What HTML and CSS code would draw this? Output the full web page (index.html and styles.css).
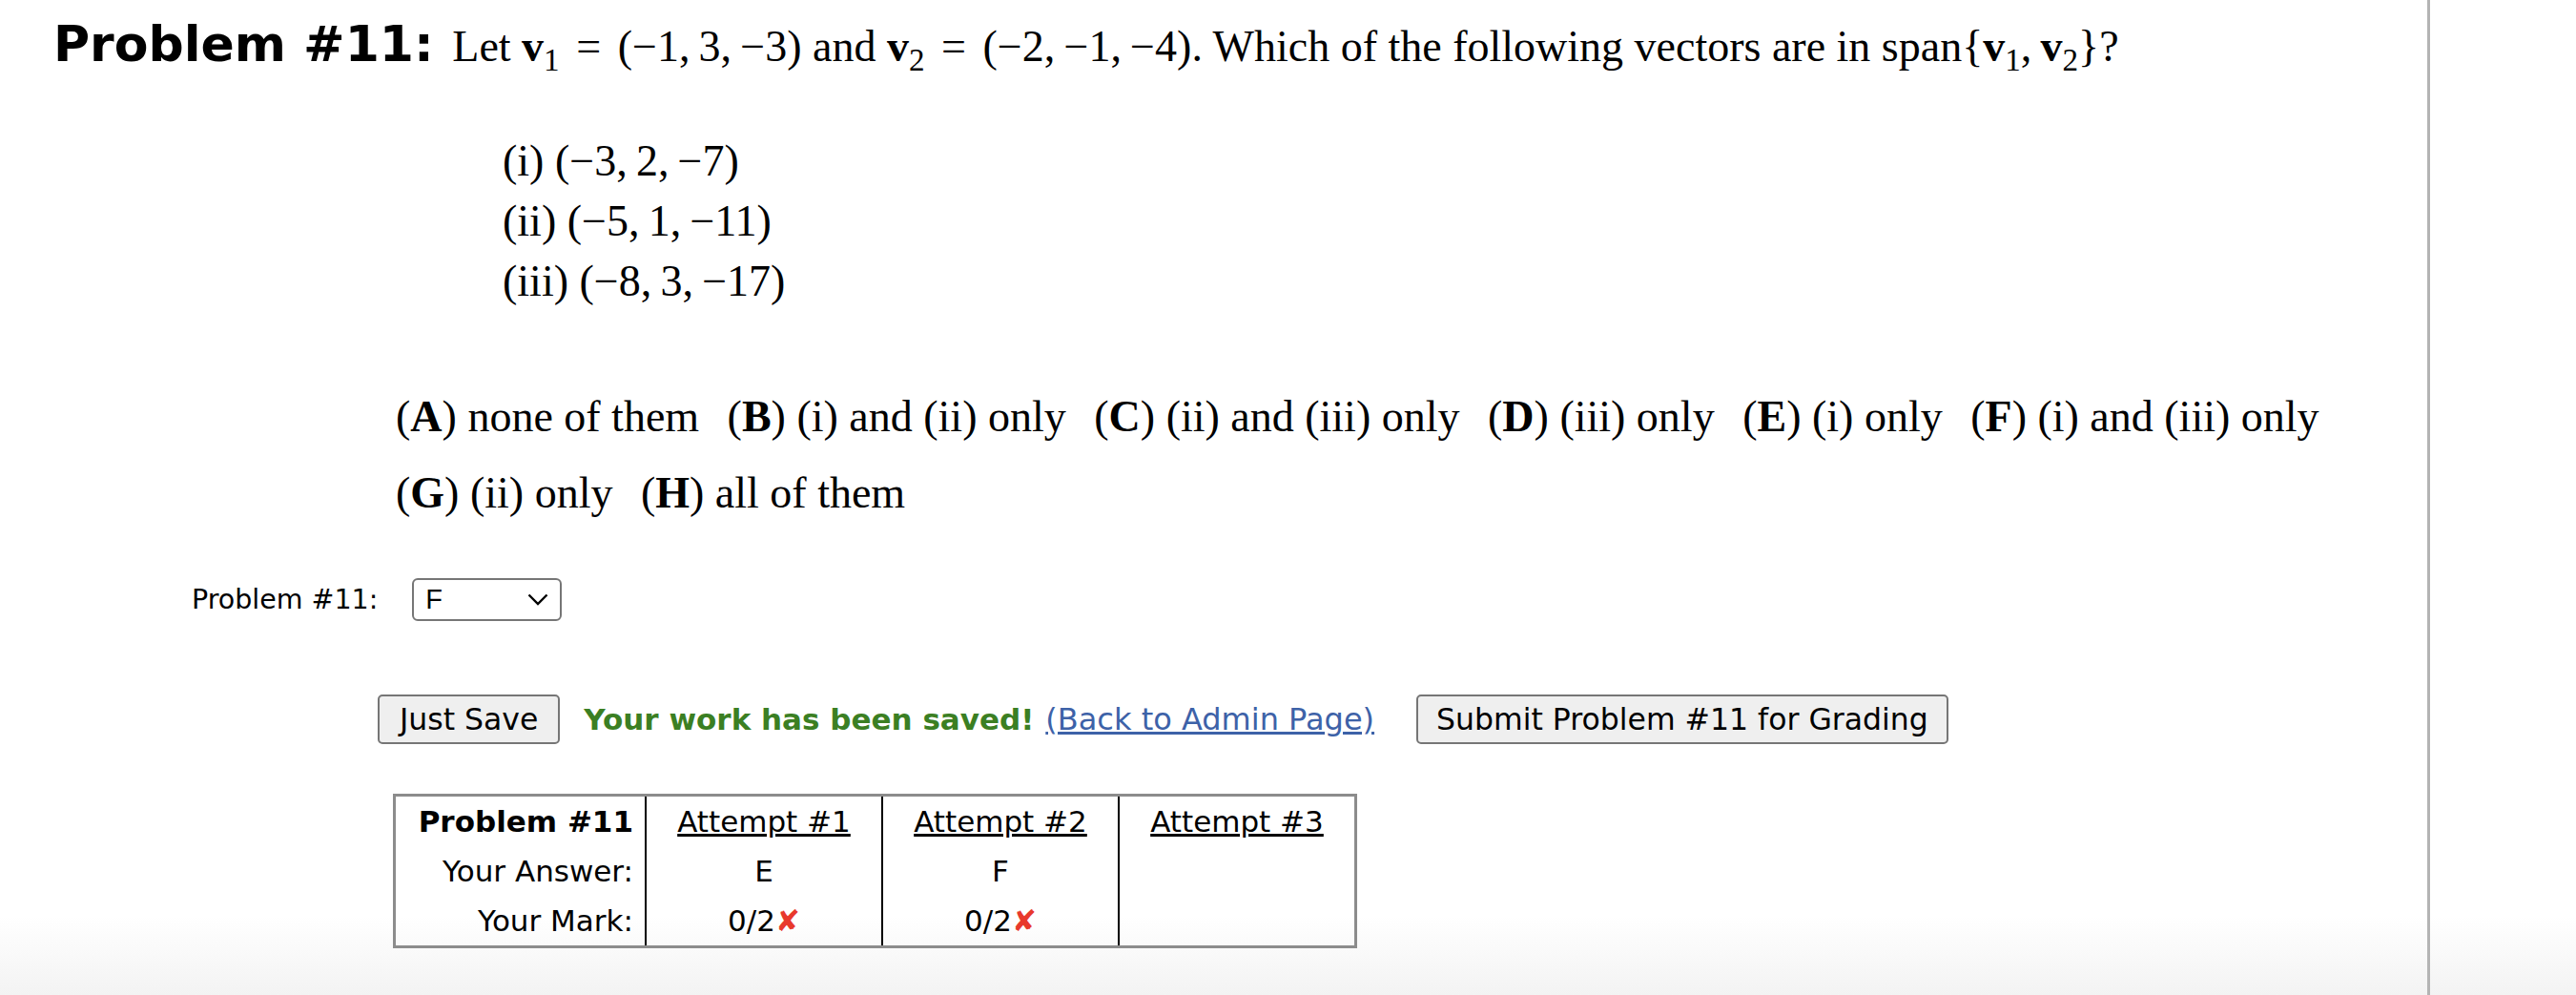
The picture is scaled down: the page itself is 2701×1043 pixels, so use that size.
FILE: index.html
```html
<!DOCTYPE html>
<html lang="en">
<head>
    <meta charset="UTF-8">
    <title>Problem #11</title>
    <link rel="stylesheet" href="styles.css">
</head>
<body>
    <div class="page">
        <p class="statement"><span class="prob-num">Problem #11:</span> Let <b>v</b><sub>1</sub> <span class="rel">=</span> (−1,&thinsp;3,&thinsp;−3) and <b>v</b><sub>2</sub> <span class="rel">=</span> (−2,&thinsp;−1,&thinsp;−4). Which of the following vectors are in span{<b>v</b><sub>1</sub>,&thinsp;<b>v</b><sub>2</sub>}?</p>

        <div class="vectors">
            <div>(i) (−3,&thinsp;2,&thinsp;−7)</div>
            <div>(ii) (−5,&thinsp;1,&thinsp;−11)</div>
            <div>(iii) (−8,&thinsp;3,&thinsp;−17)</div>
        </div>

        <div class="choices">
            <span class="choice">(<b>A</b>) none of them</span>
            <span class="choice">(<b>B</b>) (i) and (ii) only</span>
            <span class="choice">(<b>C</b>) (ii) and (iii) only</span>
            <span class="choice">(<b>D</b>) (iii) only</span>
            <span class="choice">(<b>E</b>) (i) only</span>
            <span class="choice">(<b>F</b>) (i) and (iii) only</span>
            <span class="choice">(<b>G</b>) (ii) only</span>
            <span class="choice">(<b>H</b>) all of them</span>
        </div>

        <div class="answer-row">
            <label class="answer-label">Problem #11:</label>
            <div class="answer-select">
                <span>F</span>
                <svg width="22" height="13" viewBox="0 0 22 13"><polyline points="1.5,1.5 11,11 20.5,1.5" fill="none" stroke="#000" stroke-width="2.4"/></svg>
            </div>
        </div>

        <div class="actions">
            <button class="btn">Just Save</button>
            <span class="saved">Your work has been saved!</span>
            <a href="#" class="admin-link">(Back to Admin Page)</a>
            <button class="btn submit">Submit Problem #11 for Grading</button>
        </div>

        <table class="attempts">
            <tr>
                <th>Problem #11</th>
                <td><u>Attempt #1</u></td>
                <td><u>Attempt #2</u></td>
                <td><u>Attempt #3</u></td>
            </tr>
            <tr>
                <th class="row-label">Your Answer:</th>
                <td>E</td>
                <td>F</td>
                <td></td>
            </tr>
            <tr>
                <th class="row-label">Your Mark:</th>
                <td>0/2<span class="wrong">✘</span></td>
                <td>0/2<span class="wrong">✘</span></td>
                <td></td>
            </tr>
        </table>
    </div>
</body>
</html>
```

FILE: styles.css
```css
body {
    margin: 0;
    padding: 0;
    background: linear-gradient(to bottom, #ffffff 0, #ffffff 960px, #f3f3f3 1043px);
    min-height: 1043px;
    font-family: "Liberation Serif", "Times New Roman", serif;
    color: #000;
}
.page {
    width: 2548px;
    min-height: 1043px;
    border-right: 3px solid #b4b4b4;
    box-sizing: border-box;
    padding-top: 16px;
}
.statement {
    margin: 0;
    padding-left: 56px;
    font-size: 46px;
    line-height: 60px;
}
.prob-num {
    font-family: "DejaVu Sans", Verdana, sans-serif;
    font-weight: bold;
    font-size: 52px;
    margin-right: 8px;
}
.statement sub {
    font-size: 0.72em;
    line-height: 0;
}
.rel {
    margin: 0 6px;
}
.vectors {
    margin-top: 58px;
    padding-left: 527px;
    font-size: 46px;
    line-height: 63px;
}
.choices {
    margin-top: 71px;
    padding-left: 415px;
    width: 2100px;
    font-size: 46px;
    line-height: 80px;
}
.choice {
    white-space: nowrap;
    margin-right: 18px;
}
.answer-row {
    display: flex;
    align-items: center;
    margin-top: 49px;
    padding-left: 201px;
}
.answer-label {
    font-family: "DejaVu Sans", Verdana, sans-serif;
    font-size: 28.5px;
    margin-right: 36px;
}
.answer-select {
    display: flex;
    align-items: center;
    justify-content: space-between;
    width: 157px;
    height: 45px;
    box-sizing: border-box;
    border: 2.5px solid #767676;
    border-radius: 6px;
    padding: 0 12px 0 12px;
    font-family: "Liberation Sans", Arial, sans-serif;
    font-size: 29px;
}
.actions {
    display: flex;
    align-items: center;
    margin-top: 77px;
    padding-left: 396px;
    font-family: "DejaVu Sans", Verdana, sans-serif;
    font-size: 31px;
}
.btn {
    font-family: "DejaVu Sans", Verdana, sans-serif;
    font-size: 31.5px;
    height: 52px;
    padding: 0 21px;
    background-color: #efefef;
    border: 2.5px solid #767676;
    border-radius: 5px;
    color: #000;
}
.saved {
    color: #3b7f23;
    font-weight: bold;
    margin-left: 25px;
}
.admin-link {
    color: #3d62a8;
    font-size: 32px;
    margin-left: 12px;
}
.submit {
    margin-left: 44px;
    padding: 0 19px;
}
.attempts {
    margin-top: 52px;
    margin-left: 412px;
    border-collapse: collapse;
    border: 3px solid #8c8c8c;
    font-family: "DejaVu Sans", Verdana, sans-serif;
    font-size: 31px;
}
.attempts th,
.attempts td {
    height: 52px;
    padding: 0 10px;
    border-left: 2px solid #000;
    text-align: center;
    font-weight: normal;
}
.attempts th {
    width: 239px;
    padding-right: 12px;
    text-align: right;
    border-left: none;
}
.attempts tr:first-child th {
    font-weight: bold;
}
.attempts td {
    width: 226px;
}
.wrong {
    color: #e8392c;
}
```
